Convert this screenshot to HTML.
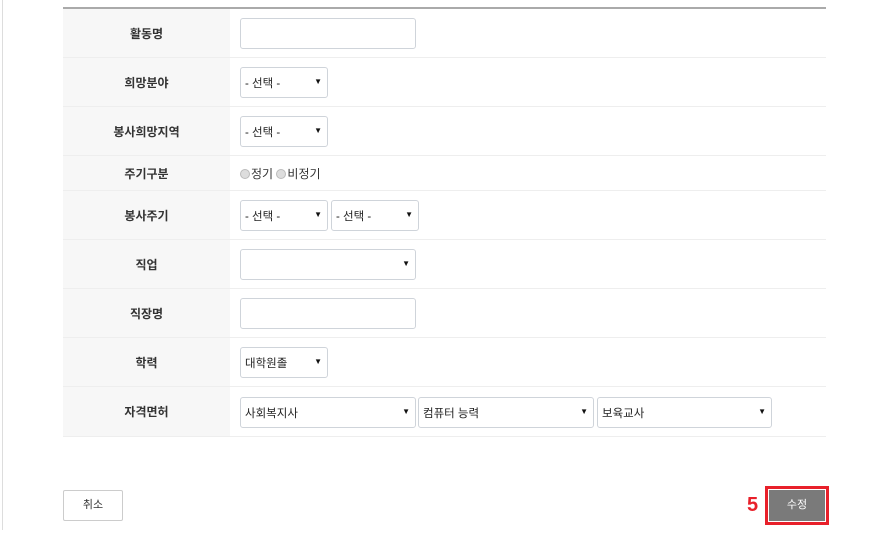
<!DOCTYPE html>
<html><head><meta charset="utf-8"><style>
*{box-sizing:border-box;margin:0;padding:0}
body{width:891px;height:550px;background:#fff;position:relative;overflow:hidden;font-family:"Liberation Sans","Noto Sans CJK KR",sans-serif;color:#333;font-size:12px}
.lb{position:absolute;left:2px;top:0;width:1px;height:530px;background:#ddd}
.top{position:absolute;left:63px;top:7px;width:763px;height:2px;background:#aaa}
.row{position:absolute;left:63px;width:763px;border-bottom:1px solid #eee}
.lab{position:absolute;left:0;top:0;bottom:0;width:167px;background:#f7f7f7;display:flex;align-items:center;justify-content:center;font-weight:bold;font-size:12px;color:#333}
.f{position:absolute;border:1px solid #cfd4da;border-radius:3px;background:#fff;height:31px;font-size:11.5px;line-height:32px;padding-left:4px;color:#222}
.f.s::after{content:"▼";position:absolute;right:5px;top:-2px;font-size:8px;color:#111}
.rad{position:absolute;left:177px;top:9px;font-size:12px;color:#333}
.rad i{display:inline-block;width:10px;height:10px;border-radius:50%;background:#ddd;border:1px solid #bbb;vertical-align:-1px;margin-right:1px}
.btn{position:absolute;border:1px solid #ccc;border-radius:2px;background:#fff;text-align:center;font-size:11px;line-height:29px}
</style></head><body>
<div class="lb"></div>
<div class="top"></div>
<div class="row" style="top:9px;height:49px"><div class="lab">활동명</div><div class="f" style="left:177px;top:9px;width:176px"></div></div>
<div class="row" style="top:58px;height:49px"><div class="lab">희망분야</div><div class="f s" style="left:177px;top:9px;width:88px">- 선택 -</div></div>
<div class="row" style="top:107px;height:49px"><div class="lab">봉사희망지역</div><div class="f s" style="left:177px;top:9px;width:88px">- 선택 -</div></div>
<div class="row" style="top:156px;height:35px"><div class="lab">주기구분</div><div class="rad"><i></i>정기 <i></i>비정기</div></div>
<div class="row" style="top:191px;height:49px"><div class="lab">봉사주기</div><div class="f s" style="left:177px;top:9px;width:88px">- 선택 -</div><div class="f s" style="left:268px;top:9px;width:88px">- 선택 -</div></div>
<div class="row" style="top:240px;height:49px"><div class="lab">직업</div><div class="f s" style="left:177px;top:9px;width:176px"></div></div>
<div class="row" style="top:289px;height:49px"><div class="lab">직장명</div><div class="f" style="left:177px;top:9px;width:176px"></div></div>
<div class="row" style="top:338px;height:49px"><div class="lab">학력</div><div class="f s" style="left:177px;top:9px;width:88px">대학원졸</div></div>
<div class="row" style="top:387px;height:50px"><div class="lab">자격면허</div><div class="f s" style="left:177px;top:10px;width:176px">사회복지사</div><div class="f s" style="left:355px;top:10px;width:176px">컴퓨터 능력</div><div class="f s" style="left:534px;top:10px;width:175px">보육교사</div></div>
<div class="btn" style="left:63px;top:490px;width:60px;height:31px">취소</div>
<div style="position:absolute;left:747px;top:494px;color:#e8202a;font-weight:bold;font-size:20px">5</div>
<div style="position:absolute;left:765px;top:486px;width:64px;height:39px;border:3px solid #e8202a;background:#fff"><div style="position:absolute;left:1px;top:1px;right:1px;bottom:1px;background:#7a7a7a;color:#fff;font-size:11px;text-align:center;line-height:31px">수정</div></div>
</body></html>
